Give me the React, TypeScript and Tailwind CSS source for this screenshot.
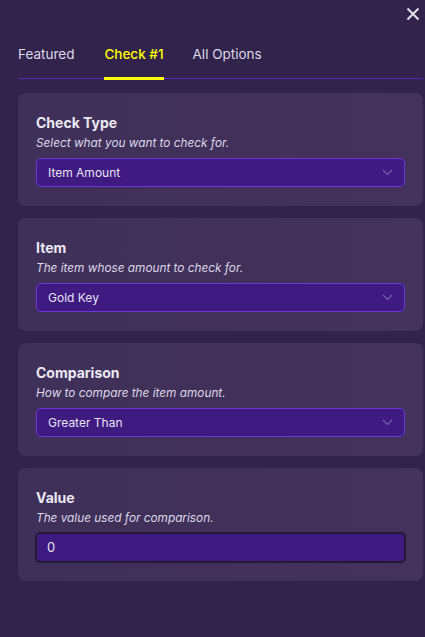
import React from "react";

const fields = [
  { title: "Check Type", desc: "Select what you want to check for.", value: "Item Amount", kind: "select" },
  { title: "Item", desc: "The item whose amount to check for.", value: "Gold Key", kind: "select" },
  { title: "Comparison", desc: "How to compare the item amount.", value: "Greater Than", kind: "select" },
  { title: "Value", desc: "The value used for comparison.", value: "0", kind: "input" },
];

const Chevron = () => (
  <svg width="11" height="7" viewBox="0 0 11 7" fill="none">
    <path d="M1 1l4.5 4.5L10 1" stroke="#7b5fb8" strokeWidth="1.2" />
  </svg>
);

export default function App() {
  return (
    <div
      className="w-[425px] h-[637px] bg-[#32234d] relative overflow-hidden text-white"
      style={{ fontFamily: "Inter, 'Liberation Sans', sans-serif" }}
    >
      <button className="absolute right-[4px] top-[6px] w-[16px] h-[16px] flex items-center justify-center">
        <svg width="14" height="14" viewBox="0 0 14 14">
          <path d="M1.5 1.5l11 11M12.5 1.5l-11 11" stroke="#e4e0ee" strokeWidth="2" />
        </svg>
      </button>

      <div className="pl-[18px] pr-[2px] pt-[43px]">
        <div className="flex border-b border-[#5a25bd] h-[36px] whitespace-nowrap">
          <div className="text-[13.5px] text-[#ddd8e8] pt-[1px]">Featured</div>
          <div className="ml-[30px] text-[13.5px] font-medium text-[#ffff00] pt-[1px] border-b-[3px] border-[#ffff00] h-[37px]">
            Check #1
          </div>
          <div className="ml-[29px] text-[13.5px] text-[#ddd8e8] pt-[1px]">All Options</div>
        </div>

        <div className="mt-[14px] flex flex-col gap-[12px]">
          {fields.map((f) => (
            <div
              key={f.title}
              className="rounded-[8px] bg-gradient-to-r from-[#3f3059] to-[#43325b] h-[113px] px-[18px] pt-[21px]"
            >
              <div className="text-[14px] font-bold text-[#ece8f3] leading-[18px]">{f.title}</div>
              <div className="text-[11.8px] italic text-[#ddd8e8] leading-[16px] mt-[3px]">{f.desc}</div>
              {f.kind === "select" ? (
                <div className="mt-[7px] h-[29px] rounded-[5px] bg-[#3e1a81] border border-[#6a36dc] flex items-center justify-between pl-[11px] pr-[11px]">
                  <span className="text-[12px] text-[#e7e2f2]">{f.value}</span>
                  <Chevron />
                </div>
              ) : (
                <div className="mt-[6px] h-[31px] rounded-[5px] border-2 border-[#241a36] bg-[#3e1a81] flex items-center pl-[10px] -mx-[1px]">
                  <span className="text-[13px] text-[#e7e2f2]">{f.value}</span>
                </div>
              )}
            </div>
          ))}
        </div>
      </div>
    </div>
  );
}
